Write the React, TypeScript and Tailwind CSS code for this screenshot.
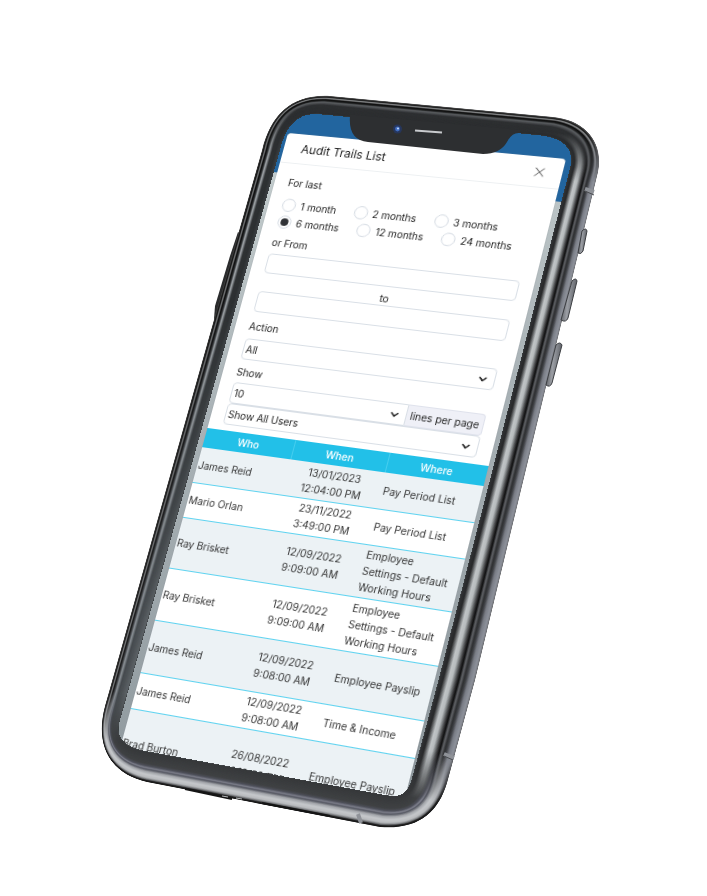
import { useState } from "react";
import { ChevronDown, X } from "lucide-react";

type Point = [number, number];

/** Projects a flat sheet of the given size onto four corners (tl, tr, br, bl). */
function projectSheet(width: number, height: number, corners: Point[]): string {
  const [[x0, y0], [x1, y1], [x2, y2], [x3, y3]] = corners;
  const dx1 = x1 - x2;
  const dx2 = x3 - x2;
  const dx3 = x0 - x1 + x2 - x3;
  const dy1 = y1 - y2;
  const dy2 = y3 - y2;
  const dy3 = y0 - y1 + y2 - y3;
  const det = dx1 * dy2 - dx2 * dy1;
  const g = (dx3 * dy2 - dx2 * dy3) / det;
  const h = (dx1 * dy3 - dx3 * dy1) / det;
  const m = [
    (x1 - x0 + g * x1) / width,
    (y1 - y0 + g * y1) / width,
    0,
    g / width,
    (x3 - x0 + h * x3) / height,
    (y3 - y0 + h * y3) / height,
    0,
    h / height,
    0,
    0,
    1,
    0,
    x0,
    y0,
    0,
    1,
  ];
  return `matrix3d(${m.map((n) => n.toFixed(10)).join(",")})`;
}

const sheetTransform = projectSheet(280, 600, [
  [288, 133],
  [566, 159],
  [415, 758],
  [131, 708],
]);

/* Outline: a start point, two lines, then curves at the four corners. */
const glass = [
  119, 722, 273, 173, 280, 148, 286, 126, 297, 111, 322, 114, 541, 135, 560, 137, 575, 146, 571, 166, 439, 680, 412,
  780, 408, 793, 402, 798, 388, 796, 388, 796, 143, 751, 124, 747, 115, 738, 119, 722,
];
const shell = [
  105, 706, 240, 227, 262, 150, 271, 114, 292, 94, 330, 96, 553, 117, 585, 120, 604, 142, 598, 172, 475, 680, 447,
  783, 438, 813, 418, 830, 380, 827, 380, 827, 147, 782, 112, 774, 94, 748, 105, 706,
];

function outline(t: number): string {
  const p = glass.map((v, i) => (v + (shell[i] - v) * t).toFixed(2));
  const q = (...ix: number[]) => ix.map((i) => p[i]).join(" ");
  return [
    "M" + q(0, 1),
    "L" + q(2, 3),
    "L" + q(4, 5),
    "C" + q(6, 7, 8, 9, 10, 11),
    "L" + q(12, 13),
    "C" + q(14, 15, 16, 17, 18, 19),
    "L" + q(20, 21),
    "L" + q(22, 23),
    "C" + q(24, 25, 26, 27, 28, 29),
    "L" + q(32, 33),
    "C" + q(34, 35, 36, 37, 38, 39),
    "Z",
  ].join("");
}

type Stop = [number, number, number, number];
type Side = "left" | "lowerLeft" | "right" | "top" | "bottom";

/* Tones of each side of the frame, from the glass (0) to the outer edge (1). */
const tones: Record<Side, Stop[]> = {
  left: [
    [0, 60, 64, 67],
    [0.2, 46, 49, 51],
    [0.42, 48, 51, 53],
    [0.57, 165, 170, 174],
    [0.66, 50, 52, 54],
    [0.76, 10, 10, 10],
    [0.84, 130, 132, 134],
    [0.91, 14, 14, 14],
    [1, 70, 70, 70],
  ],
  lowerLeft: [
    [0, 94, 100, 104],
    [0.3, 78, 83, 87],
    [0.48, 70, 75, 79],
    [0.62, 140, 146, 151],
    [0.72, 60, 62, 65],
    [0.8, 20, 20, 20],
    [0.87, 140, 142, 144],
    [0.93, 20, 20, 20],
    [1, 70, 70, 70],
  ],
  right: [
    [0, 50, 52, 54],
    [0.12, 40, 41, 42],
    [0.2, 120, 123, 125],
    [0.27, 192, 196, 198],
    [0.36, 184, 188, 190],
    [0.46, 90, 92, 94],
    [0.52, 40, 40, 42],
    [0.56, 16, 16, 17],
    [0.63, 98, 100, 104],
    [0.7, 46, 47, 49],
    [0.76, 64, 66, 70],
    [0.84, 122, 125, 134],
    [0.95, 142, 146, 155],
    [1, 116, 118, 124],
  ],
  top: [
    [0, 44, 46, 48],
    [0.5, 46, 48, 50],
    [0.66, 92, 95, 98],
    [0.73, 30, 31, 32],
    [0.8, 12, 12, 12],
    [0.87, 150, 152, 154],
    [0.93, 14, 14, 14],
    [1, 90, 90, 90],
  ],
  bottom: [
    [0, 54, 56, 58],
    [0.4, 64, 66, 68],
    [0.48, 78, 80, 90],
    [0.54, 124, 126, 138],
    [0.59, 84, 86, 96],
    [0.66, 160, 163, 168],
    [0.76, 198, 200, 203],
    [0.86, 184, 187, 190],
    [0.92, 110, 112, 115],
    [0.96, 30, 30, 30],
    [1, 24, 24, 24],
  ],
};

/* Line along which each side fades in, over the sides before it. */
const fades: { side: Side; from: Point; to: Point }[] = [
  { side: "lowerLeft", from: [240, 300], to: [150, 620] },
  { side: "right", from: [300, 440], to: [400, 460] },
  { side: "top", from: [427, 168], to: [431, 122] },
  { side: "bottom", from: [275, 722], to: [266, 770] },
];

function tone(stops: Stop[], t: number): string {
  const k = Math.max(
    1,
    stops.findIndex((s) => s[0] >= t),
  );
  const a = stops[k - 1];
  const b = stops[k];
  const f = Math.min(1, Math.max(0, (t - a[0]) / (b[0] - a[0])));
  return `rgb(${[1, 2, 3].map((i) => Math.round(a[i] + (b[i] - a[i]) * f)).join(",")})`;
}

const LAYERS = 48;
const layers = Array.from({ length: LAYERS + 1 }, (_, i) => 1 - i / LAYERS);

function Backdrop() {
  return (
    <svg className="absolute inset-0" width="707" height="896" aria-hidden="true">
      <defs>
        <clipPath id="glass" clipPathUnits="userSpaceOnUse">
          <path d={outline(0)} />
        </clipPath>
        <linearGradient id="strip" x1="230" y1="170" x2="320" y2="780" gradientUnits="userSpaceOnUse">
          <stop offset="0" stopColor="#c3cccd" />
          <stop offset="0.4" stopColor="#a9b2b6" />
          <stop offset="1" stopColor="#8d979c" />
        </linearGradient>
      </defs>
      <g clipPath="url(#glass)">
        <rect width="707" height="896" fill="url(#strip)" />
        <path d="M200 50H640V210L562 202L273 172L200 165Z" fill="#22659f" />
      </g>
    </svg>
  );
}

function Bands({ side }: { side: Side }) {
  return layers.map((t) => <path key={t} d={outline(t)} fill={tone(tones[side], t)} />);
}

function Frame() {
  return (
    <svg className="pointer-events-none absolute inset-0" width="707" height="896" aria-hidden="true">
      <defs>
        <clipPath id="band">
          <path d={outline(1) + outline(0)} clipRule="evenodd" />
        </clipPath>
        {fades.map(({ side, from, to }) => (
          <g key={side}>
            <linearGradient
              id={`fade-${side}`}
              x1={from[0]}
              y1={from[1]}
              x2={to[0]}
              y2={to[1]}
              gradientUnits="userSpaceOnUse"
            >
              <stop offset="0" stopColor="#000" />
              <stop offset="1" stopColor="#fff" />
            </linearGradient>
            <mask id={`mask-${side}`} maskUnits="userSpaceOnUse" x="0" y="0" width="707" height="896">
              <rect width="707" height="896" fill={`url(#fade-${side})`} />
            </mask>
          </g>
        ))}
        <linearGradient id="key" x1="0" x2="1" y1="0" y2="0.2">
          <stop offset="0" stopColor="#4a4c50" />
          <stop offset="0.5" stopColor="#9b9ea4" />
          <stop offset="1" stopColor="#5d6066" />
        </linearGradient>
      </defs>

      <path d="M238 232L230 256L215 306L214 319L219 318L243 236Z" fill="#2a2b2c" />

      <g clipPath="url(#band)">
        <Bands side="left" />
        {fades.map(({ side }) => (
          <g key={side} mask={`url(#mask-${side})`}>
            <Bands side={side} />
          </g>
        ))}
      </g>

      <g stroke="#3c3e42" strokeWidth="1" fill="url(#key)">
        <path d="M582 231Q586 227 587 231L583 251Q581 255 578 253Z" />
        <path d="M572 281Q576 277 577 281L568 318Q566 323 561 320Z" />
        <path d="M556 345Q560 341 562 345L552 383Q550 388 546 385Z" />
      </g>
      <path d="M585 189L594 192M444 754L454 758M358 814L361 823" stroke="#8f9298" strokeWidth="4" />
      <path d="M585 191L594 195M444 756L453 760" stroke="#4a4c50" strokeWidth="1" />
      <path d="M185 789L232 799M262 803L330 816" stroke="#141414" strokeWidth="2" />
      <path d="M222 796L228 797M236 798L242 799" stroke="#b9bbbd" strokeWidth="1" />

      <path
        d="M344 114L350 116Q348 140 368 142L483 154Q500 154 507 142Q512 132 520 133L520 130Z"
        fill="#2d2f31"
      />
      <circle cx="397.5" cy="129" r="4.5" fill="#26365c" />
      <circle cx="397.5" cy="129" r="2.4" fill="#3f6cc0" />
      <circle cx="398" cy="128.5" r="1.1" fill="#b9d0f5" />
      <path d="M415 130.500L442 132.500" stroke="#c9cbce" strokeWidth="2" />
    </svg>
  );
}

const field = "block w-full rounded-sm border border-[#d9dfe6] bg-white px-[2px] text-[10px] text-[#222] outline-none";

const periods = [
  ["1 month", "2 months", "3 months"],
  ["6 months", "12 months", "24 months"],
];

const rows = [
  { who: "James Reid", date: "13/01/2023", time: "12:04:00 PM", where: "Pay Period List", size: "h-9" },
  { who: "Mario Orlan", date: "23/11/2022", time: "3:49:00 PM", where: "Pay Period List", size: "h-9" },
  { who: "Ray Brisket", date: "12/09/2022", time: "9:09:00 AM", where: "Employee Settings - Default Working Hours", size: "h-13" },
  { who: "Ray Brisket", date: "12/09/2022", time: "9:09:00 AM", where: "Employee Settings - Default Working Hours", size: "h-[53px]" },
  { who: "James Reid", date: "12/09/2022", time: "9:08:00 AM", where: "Employee Payslip", size: "h-[53px]" },
  { who: "James Reid", date: "12/09/2022", time: "9:08:00 AM", where: "Time & Income", size: "h-9" },
  { who: "Brad Burton", date: "26/08/2022", time: "1:12:00 PM", where: "Employee Payslip", size: "h-17" },
];

function Chevron() {
  return <ChevronDown className="pointer-events-none absolute top-1.5 right-1.5 size-3" strokeWidth={3} />;
}

function AuditTrails() {
  const [period, setPeriod] = useState("6 months");
  return (
    <div
      className="w-[280px] origin-top-left rounded-t bg-white font-['Inter','Liberation_Sans',sans-serif] text-[10px] text-[#222] shadow-[0_0_1px_#8a9196]"
      style={{ transform: sheetTransform }}
    >
      <header className="flex h-8 items-center justify-between border-b border-[#edf0f2] pr-3.5 pl-4.5">
        <h1 className="text-[12px] font-normal">Audit Trails List</h1>
        <button type="button" aria-label="Close">
          <X className="size-4 text-[#666]" strokeWidth={1.5} />
        </button>
      </header>

      <form className="px-3.5 pt-2.5">
        <fieldset>
          <legend className="h-5 leading-5">For last</legend>
          <div className="mt-[5px]">
            {periods.map((line, i) => (
              <div key={i} className="flex h-[18px] items-center gap-[18px]">
                {line.map((name) => (
                  <label key={name} className="flex items-center gap-[5px] whitespace-nowrap">
                    <input
                      type="radio"
                      name="period"
                      checked={period === name}
                      onChange={() => setPeriod(name)}
                      className="size-3.5 appearance-none rounded-full border border-[#d5dbe3] bg-white bg-clip-content p-0.5 checked:bg-[#303236]"
                    />
                    {name}
                  </label>
                ))}
              </div>
            ))}
          </div>
        </fieldset>

        <label htmlFor="from" className="mt-[3px] block h-[22px] leading-5">
          or From
        </label>
        <input id="from" type="text" className={`${field} h-[21px]`} />
        <label htmlFor="to" className="block h-[19px] pt-1 text-center leading-4">
          to
        </label>
        <input id="to" type="text" className={`${field} h-[22px]`} />

        <label htmlFor="action" className="mt-[5px] block h-[22px] leading-5">
          Action
        </label>
        <div className="relative mt-px">
          <select id="action" className={`${field} h-[22px] appearance-none`}>
            <option>All</option>
          </select>
          <Chevron />
        </div>

        <label htmlFor="lines" className="mt-[3px] block h-[21px] leading-5">
          Show
        </label>
        <div className="flex h-[22px]">
          <div className="relative flex-1">
            <select id="lines" className={`${field} h-[22px] appearance-none rounded-r-none`}>
              <option>10</option>
            </select>
            <Chevron />
          </div>
          <span className="flex w-[75px] items-center justify-center rounded-r-sm border border-l-0 border-[#dfe2ec] bg-[#eff0f7] whitespace-nowrap">
            lines per page
          </span>
        </div>
        <div className="relative">
          <select aria-label="User" className={`${field} h-[22px] appearance-none`}>
            <option>Show All Users</option>
          </select>
          <Chevron />
        </div>
      </form>

      <table className="mt-1.5 w-full table-fixed border-collapse text-[#333] leading-4">
        <thead>
          <tr className="h-5 bg-[#22c0e8] text-white">
            <th className="w-[90px] border-r border-[#45cdee] p-0 font-medium">Who</th>
            <th className="w-[94px] border-r border-[#45cdee] p-0 font-medium">When</th>
            <th className="p-0 font-medium">Where</th>
          </tr>
        </thead>
        <tbody>
          {rows.map((row, i) => (
            <tr key={i} className={`${row.size} border-b border-[#5fd3f0] odd:bg-[#ecf2f5]`}>
              <td className="p-0 pl-px">{row.who}</td>
              <td className="p-0 text-center">
                {row.date}
                <br />
                {row.time}
              </td>
              <td className="p-0 pr-1.5 pl-[3px]">{row.where}</td>
            </tr>
          ))}
        </tbody>
      </table>
    </div>
  );
}

export default function App() {
  return (
    <main className="flex min-h-screen items-center justify-center overflow-hidden bg-white">
      <div className="relative h-[896px] w-[707px] shrink-0">
        <Backdrop />
        <div className="absolute inset-0 [clip-path:url(#glass)]">
          <AuditTrails />
        </div>
        <Frame />
      </div>
    </main>
  );
}
